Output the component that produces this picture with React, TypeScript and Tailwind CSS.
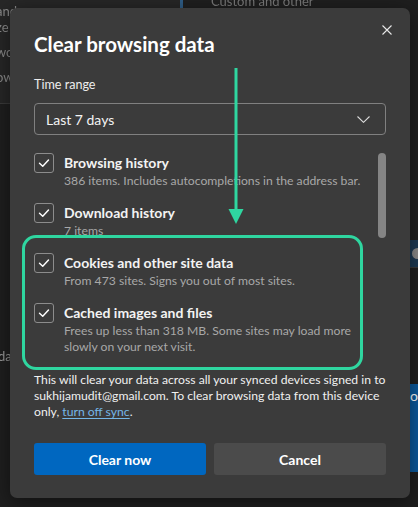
import React from 'react';

const font = { fontFamily: 'Lato, "Noto Sans", sans-serif' };

const Check = () => (
  <span className="flex h-5 w-5 shrink-0 items-center justify-center rounded-[3px] border border-[#8c8c8c]">
    <svg viewBox="0 0 20 20" className="h-5 w-5" fill="none" stroke="#ffffff" strokeWidth="1.6" strokeLinecap="round" strokeLinejoin="round">
      <path d="M5 10.2 8.6 13.6 15 6.6" />
    </svg>
  </span>
);

interface RowProps {
  title: string;
  desc: React.ReactNode;
}

const Row = ({ title, desc }: RowProps) => (
  <div className="flex gap-[10px] pb-[14px]">
    <Check />
    <div className="flex flex-col">
      <span className="text-[14px] font-bold leading-5 text-[#f3f3f3]">{title}</span>
      <span className="text-[12.2px] leading-4 text-[#a8a8a8]">{desc}</span>
    </div>
  </div>
);

export default function App() {
  return (
    <div className="relative h-[507px] w-[418px] overflow-hidden bg-[#1f1f1f]" style={font}>
      {/* blurred page behind the dialog */}
      <div className="absolute left-0 top-0 flex h-[104px] w-[180px] flex-col gap-[9px] border-b border-[#3a3a3a] bg-[#272727] pt-[3px] text-[13px] leading-4 text-[#8a8a8a] blur-[0.5px]">
        <span className="-ml-1">and</span>
        <span className="-ml-1 -mt-[9px]">ze</span>
        <span className="-ml-1">wo</span>
        <span className="-ml-1">ow</span>
      </div>
      <div className="absolute left-[180px] top-0 flex h-[10px] items-start border-l-[3px] border-[#2f5d86] pl-7 text-[13px] leading-[2px] text-[#7a7a7a] blur-[0.5px]">
        <span>Custom and other</span>
      </div>
      <span className="absolute left-[-2px] top-[347px] text-[13px] text-[#9a9a9a] blur-[0.4px]">da</span>
      <div className="absolute right-0 top-[240px] h-[28px] w-[8px] border-b border-[#3a3a3a] bg-[#1d3a54] pl-[2px] pt-[8px]">
        <span className="block h-[11px] w-[11px] rounded-full bg-[#8a8a8a]" />
      </div>
      <div className="absolute right-0 top-[384px] h-[88px] w-[8px] bg-[#0b5a9e] pt-[4px] text-[14px] leading-4 text-white">o</div>

      {/* dialog */}
      <div className="absolute left-[10px] top-[8px] flex h-[490px] w-[400px] flex-col rounded-[7px] bg-[#3b3b3b] px-6 pt-[22px] shadow-[0_4px_20px_rgba(0,0,0,0.5)]">
        <div className="flex items-start justify-between">
          <h1 className="text-[20.5px] font-bold leading-7 text-white">Clear browsing data</h1>
          <button className="-mr-[9px] -mt-[8px] flex h-4 w-4 items-center justify-center">
            <svg viewBox="0 0 10 10" className="h-[10px] w-[10px]" stroke="#e8e8e8" strokeWidth="1.1">
              <path d="M0.5 0.5 9.5 9.5M9.5 0.5 0.5 9.5" />
            </svg>
          </button>
        </div>

        <div className="mt-[17px] text-[12.6px] leading-5 text-[#ededed]">Time range</div>

        <div className="mt-2 flex h-8 items-center justify-between rounded-[4px] border border-[#808080] pl-[11px] pr-[15px]">
          <span className="text-[14px] text-[#f3f3f3]">Last 7 days</span>
          <svg viewBox="0 0 13 7" className="h-[7px] w-[13px]" fill="none" stroke="#dcdcdc" strokeWidth="1.1">
            <path d="M0.5 0.5 6.5 6.3 12.5 0.5" />
          </svg>
        </div>

        <div className="relative mt-[10px] flex h-[207px] overflow-hidden pt-2">
          <div className="flex-1 pr-[10px]">
            <Row title="Browsing history" desc="386 items. Includes autocompletions in the address bar." />
            <Row title="Download history" desc="7 items" />
            <Row title="Cookies and other site data" desc="From 473 sites. Signs you out of most sites." />
            <Row
              title="Cached images and files"
              desc={<>Frees up less than 318 MB. Some sites may load more<br />slowly on your next visit.</>}
            />
          </div>
          <div className="h-[85px] w-[8px] shrink-0 rounded-full bg-[#858585]" />
        </div>

        <p className="mt-[20px] whitespace-nowrap text-[12.2px] leading-4 text-[#f0f0f0]">
          This will clear your data across all your synced devices signed in to
          <br />
          sukhijamudit@gmail.com. To clear browsing data from this device
          <br />
          only, <a className="text-[#75b6e7] underline underline-offset-2">turn off sync</a>.
        </p>

        <div className="mt-[23px] grid grid-cols-2 gap-2">
          <button className="h-8 rounded-[3px] bg-[#0067c0] text-[14px] font-bold text-white">Clear now</button>
          <button className="h-8 rounded-[3px] bg-[#4b4b4b] text-[14px] font-bold text-white">Cancel</button>
        </div>
      </div>

      {/* annotation */}
      <div className="pointer-events-none absolute left-[22px] top-[235px] h-[135px] w-[341px] rounded-[14px] border-[3px] border-[#2fd6a0]" />
      <svg className="pointer-events-none absolute left-[226px] top-[68px]" width="20" height="158" viewBox="0 0 20 158">
        <path d="M10 0V144" stroke="#2fd6a0" strokeWidth="3" />
        <path d="M2.5 141 17.5 141 10 156Z" fill="#2fd6a0" />
      </svg>
    </div>
  );
}
